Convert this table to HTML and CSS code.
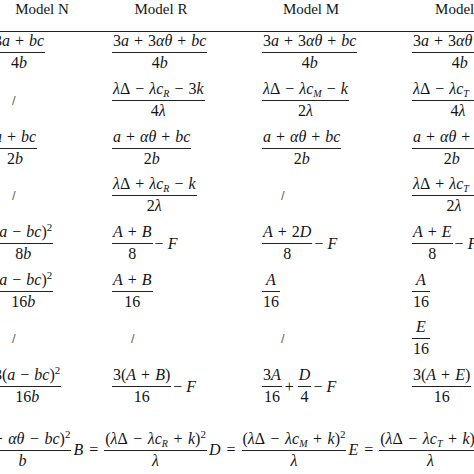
FILE: index.html
```html
<!DOCTYPE html>
<html lang="en">
<head>
<meta charset="utf-8">
<title>Model comparison</title>
<link rel="stylesheet" href="styles.css">
</head>
<body>
<div class="table">
  <div class="hd">Model N</div>
  <div class="hd">Model R</div>
  <div class="hd">Model M</div>
  <div class="hd">Model T</div>
  <div class="rule"></div>

  <!-- row 1 -->
  <div class="c"><span class="frac"><span class="num">3<i>a</i><span class="o">+</span><i>bc</i></span><span class="den">4<i>b</i></span></span></div>
  <div class="c"><span class="frac"><span class="num">3<i>a</i><span class="o">+</span>3<i>αθ</i><span class="o">+</span><i>bc</i></span><span class="den">4<i>b</i></span></span></div>
  <div class="c"><span class="frac"><span class="num">3<i>a</i><span class="o">+</span>3<i>αθ</i><span class="o">+</span><i>bc</i></span><span class="den">4<i>b</i></span></span></div>
  <div class="c"><span class="frac"><span class="num">3<i>a</i><span class="o">+</span>3<i>αθ</i><span class="o">+</span><i>bc</i></span><span class="den">4<i>b</i></span></span></div>

  <!-- row 2 -->
  <div class="c"><span class="na">/</span></div>
  <div class="c"><span class="frac"><span class="num"><i>λ</i>Δ<span class="o">−</span><i>λc</i><sub>R</sub><span class="o">−</span>3<i>k</i></span><span class="den">4<i>λ</i></span></span></div>
  <div class="c"><span class="frac"><span class="num"><i>λ</i>Δ<span class="o">−</span><i>λc</i><sub>M</sub><span class="o">−</span><i>k</i></span><span class="den">2<i>λ</i></span></span></div>
  <div class="c"><span class="frac"><span class="num"><i>λ</i>Δ<span class="o">−</span><i>λc</i><sub>T</sub><span class="o">−</span>3<i>k</i></span><span class="den">4<i>λ</i></span></span></div>

  <!-- row 3 -->
  <div class="c"><span class="frac"><span class="num"><i>a</i><span class="o">+</span><i>bc</i></span><span class="den">2<i>b</i></span></span></div>
  <div class="c"><span class="frac"><span class="num"><i>a</i><span class="o">+</span><i>αθ</i><span class="o">+</span><i>bc</i></span><span class="den">2<i>b</i></span></span></div>
  <div class="c"><span class="frac"><span class="num"><i>a</i><span class="o">+</span><i>αθ</i><span class="o">+</span><i>bc</i></span><span class="den">2<i>b</i></span></span></div>
  <div class="c"><span class="frac"><span class="num"><i>a</i><span class="o">+</span><i>αθ</i><span class="o">+</span><i>bc</i></span><span class="den">2<i>b</i></span></span></div>

  <!-- row 4 -->
  <div class="c"><span class="na">/</span></div>
  <div class="c"><span class="frac"><span class="num"><i>λ</i>Δ<span class="o">+</span><i>λc</i><sub>R</sub><span class="o">−</span><i>k</i></span><span class="den">2<i>λ</i></span></span></div>
  <div class="c"><span class="na">/</span></div>
  <div class="c"><span class="frac"><span class="num"><i>λ</i>Δ<span class="o">+</span><i>λc</i><sub>T</sub><span class="o">−</span><i>k</i></span><span class="den">2<i>λ</i></span></span></div>

  <!-- row 5 -->
  <div class="c"><span class="frac"><span class="num">(<i>a</i><span class="o">−</span><i>bc</i>)<sup>2</sup></span><span class="den">8<i>b</i></span></span></div>
  <div class="c"><span class="frac"><span class="num"><i>A</i><span class="o">+</span><i>B</i></span><span class="den">8</span></span><span class="t">−</span><i>F</i></div>
  <div class="c"><span class="frac"><span class="num"><i>A</i><span class="o">+</span>2<i>D</i></span><span class="den">8</span></span><span class="t">−</span><i>F</i></div>
  <div class="c"><span class="frac"><span class="num"><i>A</i><span class="o">+</span><i>E</i></span><span class="den">8</span></span><span class="t">−</span><i>F</i></div>

  <!-- row 6 -->
  <div class="c"><span class="frac"><span class="num">(<i>a</i><span class="o">−</span><i>bc</i>)<sup>2</sup></span><span class="den">16<i>b</i></span></span></div>
  <div class="c"><span class="frac"><span class="num"><i>A</i><span class="o">+</span><i>B</i></span><span class="den">16</span></span></div>
  <div class="c"><span class="frac"><span class="num"><i>A</i></span><span class="den">16</span></span></div>
  <div class="c"><span class="frac"><span class="num"><i>A</i></span><span class="den">16</span></span></div>

  <!-- row 7 -->
  <div class="c"><span class="na">/</span></div>
  <div class="c"><span class="na">/</span></div>
  <div class="c"><span class="na">/</span></div>
  <div class="c"><span class="frac"><span class="num"><i>E</i></span><span class="den">16</span></span></div>

  <!-- row 8 -->
  <div class="c"><span class="frac"><span class="num">3(<i>a</i><span class="o">−</span><i>bc</i>)<sup>2</sup></span><span class="den">16<i>b</i></span></span></div>
  <div class="c"><span class="frac"><span class="num">3(<i>A</i><span class="o">+</span><i>B</i>)</span><span class="den">16</span></span><span class="t">−</span><i>F</i></div>
  <div class="c"><span class="frac"><span class="num">3<i>A</i></span><span class="den">16</span></span><span class="t2">+</span><span class="frac"><span class="num"><i>D</i></span><span class="den">4</span></span><span class="t">−</span><i>F</i></div>
  <div class="c"><span class="frac"><span class="num">3(<i>A</i><span class="o">+</span><i>E</i>)</span><span class="den">16</span></span><span class="t">−</span><i>F</i></div>
</div>

<div class="defs">
  <i class="lab">A</i><span class="eq">=</span>
  <span class="frac"><span class="num">(<i>a</i><span class="o">+</span><i>αθ</i><span class="o">−</span><i>bc</i>)<sup>2</sup></span><span class="den"><i>b</i></span></span>
  <i class="lab">B</i><span class="eq">=</span>
  <span class="frac"><span class="num">(<i>λ</i>Δ<span class="o">−</span><i>λc</i><sub>R</sub><span class="o">+</span><i>k</i>)<sup>2</sup></span><span class="den"><i>λ</i></span></span>
  <i class="lab">D</i><span class="eq">=</span>
  <span class="frac"><span class="num">(<i>λ</i>Δ<span class="o">−</span><i>λc</i><sub>M</sub><span class="o">+</span><i>k</i>)<sup>2</sup></span><span class="den"><i>λ</i></span></span>
  <i class="lab">E</i><span class="eq">=</span>
  <span class="frac"><span class="num">(<i>λ</i>Δ<span class="o">−</span><i>λc</i><sub>T</sub><span class="o">+</span><i>k</i>)<sup>2</sup></span><span class="den"><i>λ</i></span></span>
</div>
</body>
</html>
```
FILE: styles.css
```css
html, body {
  margin: 0;
  padding: 0;
  background: #ffffff;
}
body {
  width: 474px;
  height: 474px;
  overflow: hidden;
  color: #141414;
  font-family: "Liberation Serif", "Times New Roman", serif;
  font-size: 16px;
}
.table {
  display: grid;
  grid-template-columns: 119px 150px 150px 150px;
  grid-template-rows: 31px 1px repeat(8, 47.7px);
  margin-left: -7px;
  width: 569px;
}
.hd {
  width: 98px;
  text-align: center;
  font-size: 15px;
  line-height: 18px;
  white-space: nowrap;
}
.rule {
  grid-column: 1 / -1;
  background: #222;
  height: 1px;
}
.c {
  display: flex;
  align-items: center;
  padding-bottom: 6px;
  white-space: nowrap;
  line-height: 16px;
}
i {
  font-style: italic;
}
.frac {
  display: inline-flex;
  flex-direction: column;
  align-items: stretch;
  text-align: center;
  white-space: nowrap;
}
.num {
  line-height: 16px;
  padding: 0 1px 3px;
  border-bottom: 1px solid #222;
}
.den {
  line-height: 16px;
  padding: 2px 1px 1px;
}
.o {
  margin: 0 5px;
}
.t {
  margin: 0 4px 0 2px;
}
.t2 {
  margin: 0 4px 0 3px;
}
sub {
  font-size: 10px;
  font-style: italic;
  vertical-align: -3px;
  line-height: 0;
}
sup {
  font-size: 11px;
  vertical-align: 6px;
  line-height: 0;
}
.na {
  margin-left: 19px;
  font-family: "Liberation Sans", Arial, sans-serif;
  font-size: 13px;
  color: #666;
}
.defs {
  display: flex;
  align-items: center;
  height: 73px;
  margin-left: -59px;
  white-space: nowrap;
  line-height: 16px;
}
.defs .o {
  margin: 0 5.5px;
}
.lab {
  margin-left: 2px;
}
.eq {
  margin: 0 6px 0 6px;
}
```
